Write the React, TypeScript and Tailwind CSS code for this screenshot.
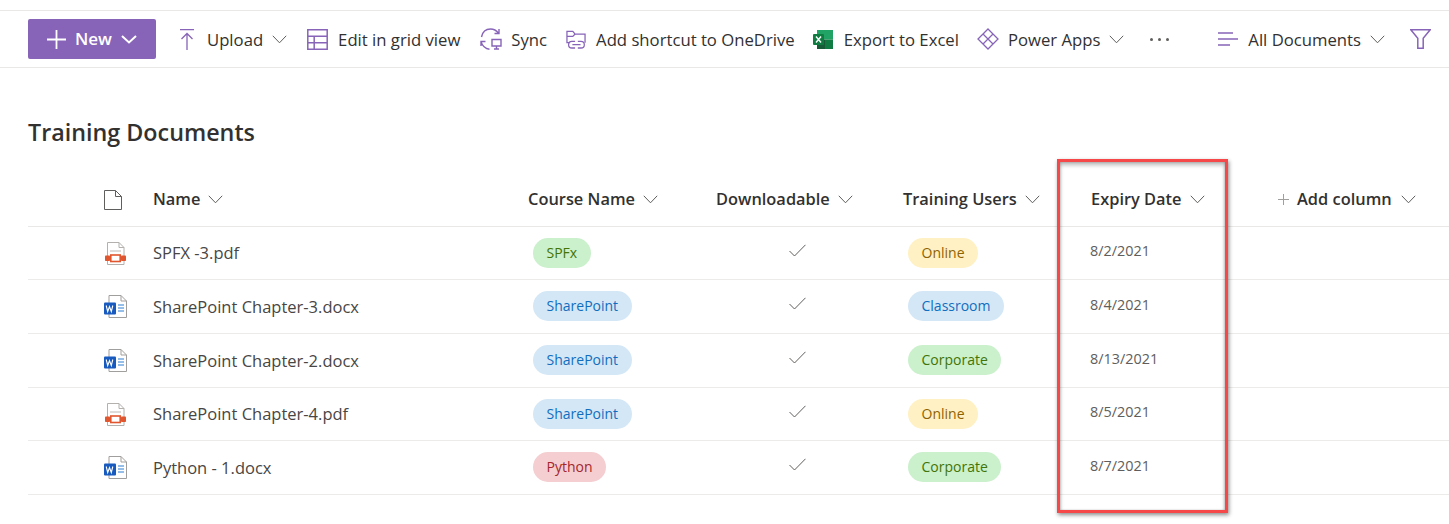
const purple = '#8764b8'

function Chevron({ color = '#605e5c' }: { color?: string }) {
  return (
    <svg width="15" height="9" viewBox="0 0 15 9" fill="none" className="shrink-0">
      <path d="M.8.8 7.5 7.8 14.2.8" stroke={color} strokeWidth="1" />
    </svg>
  )
}

function UploadIcon() {
  return (
    <svg width="14" height="21" viewBox="0 0 14 21" fill="none" stroke={purple} strokeWidth="1.3">
      <path d="M0 .7h14M7 21V4.500M1.500 10 7 4.500l5.500 5.500" />
    </svg>
  )
}

function GridIcon() {
  return (
    <svg width="21" height="21" viewBox="0 0 21 21" fill="none" stroke={purple} strokeWidth="1.5">
      <path d="M.8.8h19.400v19.400H.8zM.8 7.200h19.400M.8 13.800h19.400M7.200 7.200v13" />
    </svg>
  )
}

function SyncIcon() {
  return (
    <svg width="22" height="22" viewBox="0 0 22 22" fill="none" stroke={purple} strokeWidth="1.4">
      <path d="M1.500 9C2.500 4 6 1 10.500 1c3.500 0 6 1.500 8 4.200M19 1v4.500h-4.500" />
      <path d="M1 13.500c1 4 4.500 7.300 8.500 7.800M1 18v-4.500h4.500" />
      <path d="M12 11.500h9v6.500h-9zM14 21h5M16.500 18v3" />
    </svg>
  )
}

function ShortcutIcon() {
  return (
    <svg width="20" height="19" viewBox="0 0 22 21" fill="none" stroke={purple} strokeWidth="1.4">
      <path d="M4 14H1V1.500h6.500l2.500 3h11V14" />
      <path d="M1 7h6.500l2.500-2.500" />
      <path d="M10 12.500H6.500a3.700 3.700 0 0 0 0 7.400H10M13 12.500h3.500a3.700 3.700 0 0 1 0 7.400H13M7 16.200h9" />
    </svg>
  )
}

function ExcelIcon() {
  return (
    <svg width="20" height="19" viewBox="0 0 20 19">
      <rect x="4" y="0" width="16" height="9.500" fill="#21a366" />
      <rect x="4" y="9.500" width="8" height="9.500" fill="#185c37" />
      <rect x="12" y="9.500" width="8" height="9.500" fill="#107c41" />
      <rect x="0" y="4" width="11" height="11" rx="1" fill="#107c41" />
      <path d="M3 6.500 8 12.500M8 6.500 3 12.500" stroke="#fff" strokeWidth="1.400" />
    </svg>
  )
}

function PowerAppsIcon() {
  return (
    <svg width="22" height="22" viewBox="0 0 22 22" fill="none" stroke={purple} strokeWidth="1.3">
      <path d="M11 1 21 11 11 21 1 11zM6 6l10 10M16 6 6 16" />
    </svg>
  )
}

function ViewIcon() {
  return (
    <svg width="20" height="14" viewBox="0 0 20 14" fill="none" stroke={purple} strokeWidth="1.3">
      <path d="M0 1h15M0 7h20M0 13h12" />
    </svg>
  )
}

function FilterIcon() {
  return (
    <svg width="21" height="20" viewBox="0 0 21 20" fill="none" stroke={purple} strokeWidth="1.500">
      <path d="M.8.8h19.400l-7 8.500v10h-5.400v-10z" />
    </svg>
  )
}

function BlankDoc() {
  return (
    <svg width="18" height="20" viewBox="0 0 18 20" fill="none" stroke="#605e5c" strokeWidth="1">
      <path d="M.5.5h11l6 6v13H.5zM11.500.5v6h6" />
    </svg>
  )
}

function PdfIcon() {
  return (
    <svg width="21" height="23" viewBox="0 0 21 23" fill="none" className="ml-[2px]">
      <path d="M2.500.500h11.500l5 5v17H2.500z" fill="#fff" stroke="#b3b0ad" />
      <path d="M14 .500v5h5" stroke="#b3b0ad" />
      <path d="M5 9h11" stroke="#d2d0ce" strokeWidth="1.500" />
      <rect x="5.800" y="13" width="9.400" height="6.500" fill="#fff" stroke="#e0562f" strokeWidth="1.600" />
      <rect x="0" y="13.500" width="5" height="5.500" rx=".8" fill="#e0562f" />
      <rect x="16" y="13.500" width="5" height="5.500" rx=".8" fill="#e0562f" />
    </svg>
  )
}

function WordIcon() {
  return (
    <svg width="24" height="23" viewBox="0 0 24 23" fill="none">
      <path d="M6 .500h12l5.500 5.500v16.500H6z" fill="#fff" stroke="#a19f9d" />
      <path d="M18 .500v5.500h5.500" stroke="#a19f9d" />
      <path d="M15 10h6M15 13h6M15 16h6" stroke="#2b7cd3" />
      <rect x="1" y="7.500" width="12" height="12" rx="1" fill="#185abd" />
      <path d="M3.200 10.500l1.500 6 1.800-5 1.800 5 1.500-6" stroke="#fff" strokeWidth="1.100" />
    </svg>
  )
}

function Check() {
  return (
    <svg width="17" height="13" viewBox="0 0 17 13" fill="none" stroke="#605e5c" strokeWidth="1">
      <path d="M.5 7 5.500 12 16.500.8" />
    </svg>
  )
}

function ToolLabel({ children }: { children: string }) {
  return <span className="whitespace-nowrap pt-[2px] text-[16.700px] text-[#323130]">{children}</span>
}

const tones = {
  green: 'bg-[#caf0cc] text-[#437406]',
  blue: 'bg-[#d4e7f6] text-[#106ebe]',
  yellow: 'bg-[#fff1c3] text-[#8f6200]',
  red: 'bg-[#f4ced0] text-[#a4262c]',
}

function Pill({ tone, label }: { tone: keyof typeof tones; label: string }) {
  return (
    <span className={`inline-flex h-[30px] items-center rounded-full px-[13.500px] pb-[1px] text-[14px] ${tones[tone]}`}>
      {label}
    </span>
  )
}

function HeaderCell({ label }: { label: string }) {
  return (
    <div className="flex items-center gap-[8px] text-[16.400px] font-semibold text-[#323130]">
      {label}
      <Chevron />
    </div>
  )
}

type Row = {
  kind: 'pdf' | 'word'
  name: string
  course: [keyof typeof tones, string]
  users: [keyof typeof tones, string]
  date: string
  h: string
}

const rows: Row[] = [
  { kind: 'pdf', name: 'SPFX -3.pdf', course: ['green', 'SPFx'], users: ['yellow', 'Online'], date: '8/2/2021', h: 'h-[53px]' },
  { kind: 'word', name: 'SharePoint Chapter-3.docx', course: ['blue', 'SharePoint'], users: ['blue', 'Classroom'], date: '8/4/2021', h: 'h-[54px]' },
  { kind: 'word', name: 'SharePoint Chapter-2.docx', course: ['blue', 'SharePoint'], users: ['green', 'Corporate'], date: '8/13/2021', h: 'h-[54px]' },
  { kind: 'pdf', name: 'SharePoint Chapter-4.pdf', course: ['blue', 'SharePoint'], users: ['yellow', 'Online'], date: '8/5/2021', h: 'h-[53px]' },
  { kind: 'word', name: 'Python - 1.docx', course: ['red', 'Python'], users: ['green', 'Corporate'], date: '8/7/2021', h: 'h-[54px]' },
]

const cols = 'grid grid-cols-[125px_375px_188px_187px_187px_188px_1fr] items-center'

export default function App() {
  return (
    <div className="relative h-[524px] w-[1449px] overflow-hidden bg-white font-['Open_Sans',sans-serif]">
      <div className="mt-[10px] flex h-[58px] items-center border-y border-[#e9e8e7] pl-[28px] pr-[18px]">
        <div className="flex h-[40px] w-[128px] items-center justify-center gap-[9.500px] rounded-[2px] bg-[#8764b8] text-[17px] font-semibold text-white">
          <svg width="19" height="19" viewBox="0 0 19 19" stroke="#fff" strokeWidth="1.800"><path d="M9.500 0v19M0 9.500h19" /></svg>
          New
          <svg width="16" height="9" viewBox="0 0 16 9" fill="none" stroke="#fff" strokeWidth="2"><path d="M1 1l7 6.500L15 1" /></svg>
        </div>
        <div className="ml-[24px] mr-[13px]"><UploadIcon /></div>
        <ToolLabel>Upload</ToolLabel>
        <div className="ml-[9px] mr-[20px]"><Chevron /></div>
        <div className="mr-[10px]"><GridIcon /></div>
        <ToolLabel>Edit in grid view</ToolLabel>
        <div className="ml-[20px] mr-[9px]"><SyncIcon /></div>
        <ToolLabel>Sync</ToolLabel>
        <div className="ml-[19px] mr-[10px]"><ShortcutIcon /></div>
        <ToolLabel>Add shortcut to OneDrive</ToolLabel>
        <div className="ml-[18px] mr-[11px]"><ExcelIcon /></div>
        <ToolLabel>Export to Excel</ToolLabel>
        <div className="ml-[18px] mr-[9px]"><PowerAppsIcon /></div>
        <ToolLabel>Power Apps</ToolLabel>
        <div className="ml-[9px]"><Chevron /></div>
        <div className="ml-[26px] flex gap-[5px]">
          <span className="h-[3px] w-[3px] rounded-full bg-[#605e5c]" />
          <span className="h-[3px] w-[3px] rounded-full bg-[#605e5c]" />
          <span className="h-[3px] w-[3px] rounded-full bg-[#605e5c]" />
        </div>
        <div className="ml-auto mr-[10px]"><ViewIcon /></div>
        <ToolLabel>All Documents</ToolLabel>
        <div className="ml-[9px] mr-[25px]"><Chevron /></div>
        <FilterIcon />
      </div>

      <h1 className="ml-[28px] mt-[46px] text-[23.300px] leading-[36px] font-semibold text-[#323130]">Training Documents</h1>

      <div className="ml-[28px] mt-[27px]">
        <div className={`${cols} h-[50px] border-b border-[#e9e8e7] pb-[4px]`}>
          <div className="pl-[76px]"><BlankDoc /></div>
          <HeaderCell label="Name" />
          <HeaderCell label="Course Name" />
          <HeaderCell label="Downloadable" />
          <HeaderCell label="Training Users" />
          <div className="pl-[1px]"><HeaderCell label="Expiry Date" /></div>
          <div className="flex items-center text-[16.400px] font-semibold text-[#323130]">
            <svg width="11" height="11" viewBox="0 0 11 11" stroke="#a19f9d" strokeWidth="1" className="mr-[8px]"><path d="M5.500 0v11M0 5.500h11" /></svg>
            Add column
            <span className="ml-[9px]"><Chevron /></span>
          </div>
        </div>
        {rows.map((r) => (
          <div key={r.name} className={`${cols} ${r.h} border-b border-[#edebe9]`}>
            <div className="pl-[75px]">{r.kind === 'pdf' ? <PdfIcon /> : <WordIcon />}</div>
            <div className="pt-[1px] text-[16.500px] text-[#484644]">{r.name}</div>
            <div className="mt-[11px] self-start pl-[5px]"><Pill tone={r.course[0]} label={r.course[1]} /></div>
            <div className="pb-[6px] pl-[73px]"><Check /></div>
            <div className="mt-[11px] self-start pl-[5px]"><Pill tone={r.users[0]} label={r.users[1]} /></div>
            <div className="pb-[4px] text-[14.400px] text-[#605e5c]">{r.date}</div>
            <div />
          </div>
        ))}
      </div>

      <div className="absolute left-[1057px] top-[159px] h-[354px] w-[171px] border-[3px] border-[#f64848] shadow-[1px_2px_4px_rgba(0,0,0,0.45),inset_0_3px_4px_rgba(0,0,0,0.28),inset_1px_0_2px_rgba(0,0,0,0.12),inset_-1px_0_2px_rgba(0,0,0,0.12)]" />
    </div>
  )
}
